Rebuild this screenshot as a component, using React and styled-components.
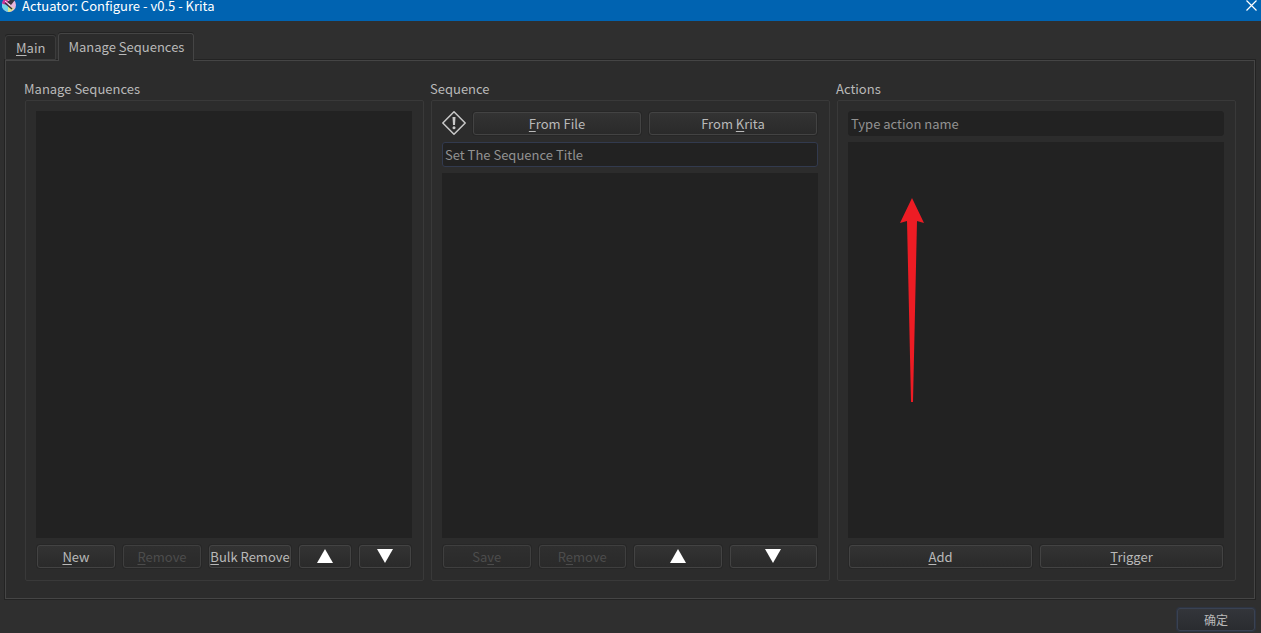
import React, { useState } from 'react'
import styled, { createGlobalStyle } from 'styled-components'

const colors = {
  title: '#0063b1',
  window: '#2f2f2f',
  panel: '#2c2c2c',
  base: '#222222',
  line: '#454545',
  groupLine: '#393939',
  shadow: '#232323',
  text: '#b9b9b9',
  muted: '#929292',
  disabled: '#4c4c4c',
  focus: '#323a4e',
}

const GlobalStyle = createGlobalStyle`
  * {
    box-sizing: border-box;
  }

  body {
    margin: 0;
    background: ${colors.window};
  }

  body, button, input {
    color: ${colors.text};
    font-family: 'Noto Sans CJK SC', sans-serif;
    font-size: 13px;
    line-height: 16px;
  }

  u {
    text-underline-offset: 2px;
    text-decoration-skip-ink: none;
  }
`

const Window = styled.div`
  display: flex;
  flex-direction: column;
  min-height: 100vh;
`

const TitleBar = styled.header`
  display: flex;
  align-items: flex-start;
  gap: 6px;
  height: 21px;
  padding-left: 2px;
  color: #fff;
  background: ${colors.title};
`

const Title = styled.h1`
  flex: 1;
  margin: 0;
  font-size: 13px;
  font-weight: 400;
  line-height: 12px;
`

const CloseButton = styled.button`
  display: flex;
  padding: 0 4px;
  border: 0;
  color: #fff;
  background: none;
`

const Tabs = styled.div`
  display: flex;
  align-items: flex-end;
  gap: 2px;
  padding: 12px 5px 0;
`

const Tab = styled.button`
  height: ${p => (p.$active ? 28 : 25)}px;
  margin-bottom: ${p => (p.$active ? -1 : 0)}px;
  padding: ${p => (p.$active ? '0 9px 2px' : '0 10px')};
  border: 1px solid ${p => (p.$active ? colors.line : '#3c3c3c')};
  border-bottom: ${p => (p.$active ? '0' : '')};
  border-radius: 3px 3px 0 0;
  background: ${p => (p.$active ? colors.panel : '#292929')};
  box-shadow: 0 -1px 0 ${colors.shadow};
  z-index: ${p => (p.$active ? 1 : 0)};
`

const Panel = styled.main`
  display: grid;
  flex: 1;
  grid-template-columns: repeat(3, minmax(0, 1fr));
  gap: 7px;
  margin: 0 6px 0 5px;
  padding: 20px 18px 17px 19px;
  border: 1px solid ${colors.line};
  background: ${colors.panel};
  box-shadow: 0 0 0 1px ${colors.shadow};
`

const Group = styled.section`
  display: flex;
  flex-direction: column;
`

const GroupTitle = styled.h2`
  margin: 0 0 3px -1px;
  font-size: 13px;
  font-weight: 400;
`

const GroupBox = styled.div`
  display: flex;
  flex: 1;
  flex-direction: column;
  gap: 6px;
  padding: 10px 11px 11px 10px;
  border: 1px solid ${colors.groupLine};
  border-radius: 2px;
`

const List = styled.ul`
  flex: 1;
  margin: 0;
  padding: 0;
  list-style: none;
  background: ${colors.base};
`

const Field = styled.input`
  width: 100%;
  height: 25px;
  padding: 0 2px;
  border: 1px solid ${p => (p.$focused ? colors.focus : colors.base)};
  border-radius: 3px;
  outline: 0;
  background: ${colors.base};

  &::placeholder {
    color: ${colors.muted};
    opacity: 1;
  }
`

const Row = styled.div`
  display: grid;
  grid-template-columns: ${p => p.$columns};
  align-items: center;
  gap: 8px;
  padding: 1px;
`

const SourceRow = styled.div`
  display: flex;
  align-items: flex-start;
  gap: 7px;
  height: 25px;
  padding-right: 1px;
`

const SourceButtons = styled.div`
  display: grid;
  flex: 1;
  grid-template-columns: 1fr 1fr;
  gap: 8px;
  padding-top: 1px;
`

const Button = styled.button`
  display: flex;
  align-items: center;
  justify-content: center;
  min-width: 0;
  height: 23px;
  padding: ${p => (p.$icon ? '0 0 1px' : '0')};
  border: 1px solid ${p => (p.$default ? '#3a4252' : '#434343')};
  border-radius: 3px;
  background: ${p => (p.$default ? 'linear-gradient(#33353a, #2a2c30)' : 'linear-gradient(#333333, #2a2a2a)')};
  box-shadow: 0 0 0 1px ${p => (p.$default ? '#2d3442' : '#272727')};
  white-space: nowrap;

  &:disabled {
    color: ${colors.disabled};
    border-color: #3f3f3f;
    background: linear-gradient(#2f2f2f, #2a2a2a);
  }
`

const Footer = styled.footer`
  display: flex;
  justify-content: flex-end;
  padding: 9px 6px 2px;

  ${Button} {
    width: 78px;
    font-size: 12px;
  }
`

const Pointer = styled.svg`
  position: absolute;
  top: 56px;
  left: 51px;
  pointer-events: none;
`

const ListArea = styled.div`
  position: relative;
  display: flex;
  flex: 1;
`

const KritaLogo = () => (
  <svg width="14" height="13" viewBox="0 0 14 13" aria-hidden="true">
    <circle cx="7" cy="5" r="7" fill="#e7b7dc" />
    <path d="M0 3a7 7 0 0 1 4-5l4 6-6 1z" fill="#c9359a" />
    <path d="M0 4l6 1 1 7A7 7 0 0 1 0 4z" fill="#6fd6e8" />
    <path d="M6 6l6 2a7 7 0 0 1-6 4z" fill="#d9e58c" />
    <path d="M5 2l6-4 2 2-4 5z" fill="#3a3640" />
    <path d="M3 3l7 6" stroke="#35313b" strokeWidth="1.5" />
    <path d="M3 1l5 4" stroke="#f4f4f8" strokeWidth="1" />
  </svg>
)

const CloseIcon = () => (
  <svg width="11" height="11" viewBox="0 0 11 11" aria-hidden="true">
    <path d="M.5.5l10 10M10.5.5l-10 10" stroke="currentColor" strokeWidth="1.2" />
  </svg>
)

const WarningIcon = () => (
  <svg width="24" height="24" viewBox="0 0 24 24" role="img" aria-label="Warning">
    <path
      d="M12 .8L23.2 12 12 23.2.8 12z"
      fill="none"
      stroke="#c9c9c9"
      strokeWidth="1.5"
      strokeLinejoin="round"
    />
    <path d="M10.5 6h3l-.5 8h-2z" fill="#c9c9c9" />
    <circle cx="12" cy="16.7" r="1.5" fill="#c9c9c9" />
  </svg>
)

const Arrow = ({ down }) => (
  <svg width="16" height="14" viewBox="0 0 16 14" aria-hidden="true">
    <path d={down ? 'M0 0h16L8 14z' : 'M8 0l8 14H0z'} fill="#fff" />
  </svg>
)

const MoveButtons = () => (
  <>
    <Button $icon aria-label="Move up">
      <Arrow />
    </Button>
    <Button $icon aria-label="Move down">
      <Arrow down />
    </Button>
  </>
)

const App = () => {
  const [title, setTitle] = useState('')
  const [action, setAction] = useState('')

  return (
    <Window>
      <GlobalStyle />
      <TitleBar>
        <KritaLogo />
        <Title>Actuator: Configure - v0.5 - Krita</Title>
        <CloseButton aria-label="Close">
          <CloseIcon />
        </CloseButton>
      </TitleBar>

      <Tabs role="tablist">
        <Tab role="tab" aria-selected="false">
          <u>M</u>ain
        </Tab>
        <Tab role="tab" aria-selected="true" $active>
          Manage <u>S</u>equences
        </Tab>
      </Tabs>

      <Panel role="tabpanel">
        <Group aria-labelledby="manage">
          <GroupTitle id="manage">Manage Sequences</GroupTitle>
          <GroupBox>
            <List aria-labelledby="manage" />
            <Row $columns="78fr 78fr 82fr 52fr 52fr">
              <Button>
                <span><u>N</u>ew</span>
              </Button>
              <Button disabled>
                <span><u>R</u>emove</span>
              </Button>
              <Button>
                <span><u>B</u>ulk Remove</span>
              </Button>
              <MoveButtons />
            </Row>
          </GroupBox>
        </Group>

        <Group aria-labelledby="sequence">
          <GroupTitle id="sequence">Sequence</GroupTitle>
          <GroupBox>
            <SourceRow>
              <WarningIcon />
              <SourceButtons>
                <Button>
                  <span><u>F</u>rom File</span>
                </Button>
                <Button>
                  <span>From <u>K</u>rita</span>
                </Button>
              </SourceButtons>
            </SourceRow>
            <Field
              $focused
              aria-label="Sequence title"
              placeholder="Set The Sequence Title"
              value={title}
              onChange={e => setTitle(e.target.value)}
            />
            <List aria-labelledby="sequence" />
            <Row $columns="repeat(4, 1fr)">
              <Button disabled>
                <span>Sa<u>v</u>e</span>
              </Button>
              <Button disabled>
                <span>R<u>e</u>move</span>
              </Button>
              <MoveButtons />
            </Row>
          </GroupBox>
        </Group>

        <Group aria-labelledby="actions">
          <GroupTitle id="actions">Actions</GroupTitle>
          <GroupBox>
            <Field
              aria-label="Action name"
              placeholder="Type action name"
              value={action}
              onChange={e => setAction(e.target.value)}
            />
            <ListArea>
              <List aria-labelledby="actions" />
              <Pointer width="26" height="206" viewBox="0 0 26 206" aria-hidden="true">
                <path
                  d="M13 0l12 25-7-2-4 181h-2L8 23l-7 2z"
                  fill="#ed1c24"
                />
              </Pointer>
            </ListArea>
            <Row $columns="1fr 1fr">
              <Button>
                <span><u>A</u>dd</span>
              </Button>
              <Button>
                <span><u>T</u>rigger</span>
              </Button>
            </Row>
          </GroupBox>
        </Group>
      </Panel>

      <Footer>
        <Button $default>确定</Button>
      </Footer>
    </Window>
  )
}

export default App
